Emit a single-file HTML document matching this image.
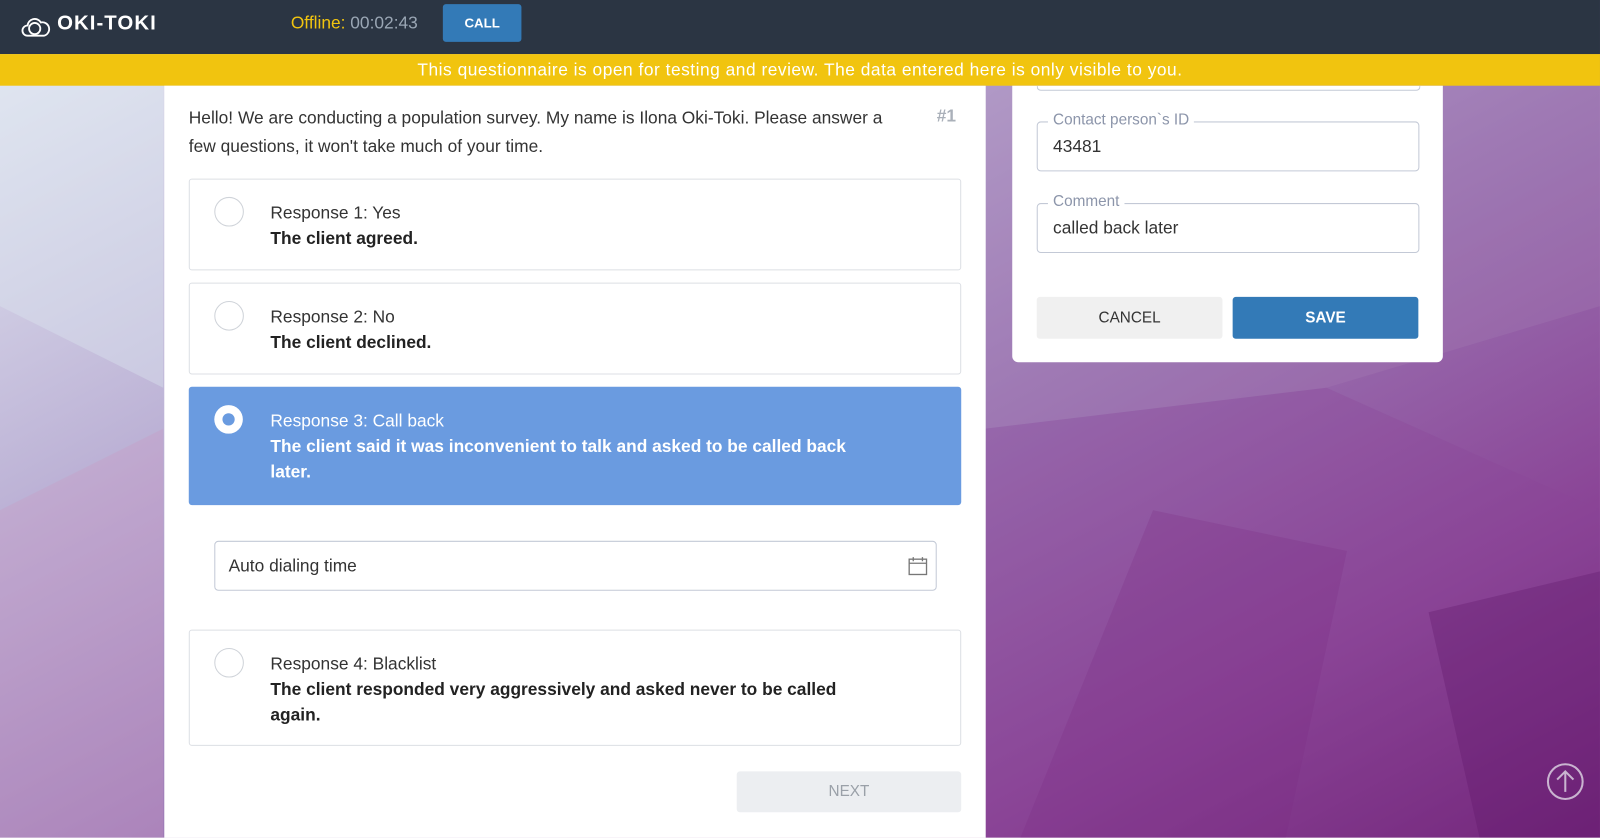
<!DOCTYPE html>
<html><head><meta charset="utf-8"><style>
html,body{margin:0;padding:0;width:1600px;height:838px;overflow:hidden;font-family:"Liberation Sans",sans-serif}
#w{position:absolute;left:0;top:0;width:1568px;height:821px;transform:scale(1.0204);transform-origin:0 0;overflow:hidden}
.abs{position:absolute}
.hdr{left:0;top:0;width:1568px;height:53px;background:#2b3543}
.ybar{left:0;top:53px;width:1568px;height:31px;background:#f1c40f;color:#fff;font-size:17px;text-align:center;line-height:31px;letter-spacing:.5px}
.card{background:#fff;border-radius:0 0 6px 6px}
.q{font-size:17px;color:#333;line-height:28px}
.resp{left:185px;width:755px;border:1px solid #dcdfe4;border-radius:3px;background:#fff;font-size:17px;color:#333}
.resp .t{position:absolute;left:79px;top:20px;line-height:25px}
.resp b{color:#222}
.rad{position:absolute;left:24px;top:17px;width:27px;height:27px;border:1px solid #cfd3d9;border-radius:50%;background:#fff}
.fld{border:1px solid #c3c9d6;border-radius:4px;background:#fff}
.lbl{position:absolute;top:-11px;left:10px;background:#fff;padding:0 5px;color:#8c95aa;font-size:15px}
.btn{border-radius:3px;text-align:center;font-size:15px}
</style></head><body><div id="w">
<svg class="abs" style="left:0;top:0" width="1568" height="821">
<defs><linearGradient id="g" x1="0" y1="0" x2="1" y2="1"><stop offset="0" stop-color="#e8eef5"/><stop offset=".3" stop-color="#bdb3d6"/><stop offset=".55" stop-color="#9c78b5"/><stop offset=".8" stop-color="#8a4496"/><stop offset="1" stop-color="#6a1a70"/></linearGradient></defs>
<rect width="1568" height="821" fill="url(#g)"/>
<polygon points="0,84 160,84 160,380 0,300" fill="#dde6f0" opacity=".4"/>
<polygon points="0,500 160,420 160,821 0,821" fill="#c99ac6" opacity=".35"/>
<polygon points="966,84 1568,84 1568,300 1300,380 966,420" fill="#a77fb3" opacity=".3"/>
<polygon points="966,420 1300,380 1568,500 1568,821 966,821" fill="#8a4598" opacity=".3"/>
<polygon points="1130,500 1320,540 1260,821 1000,821" fill="#7a2b85" opacity=".25"/>
<polygon points="1400,600 1568,560 1568,821 1450,821" fill="#5e1466" opacity=".3"/>
<circle cx="1534" cy="766" r="17" fill="none" stroke="#c9b4d0" stroke-width="2"/>
<path d="M1534 776V756M1526 764l8-8 8 8" fill="none" stroke="#c9b4d0" stroke-width="2"/>
</svg>
<div class="abs hdr"></div>
<svg class="abs" style="left:20px;top:13px" width="30" height="24" viewBox="0 0 30 24"><path d="M7 22a5 5 0 0 1 0-10 7 7 0 0 1 13-3 6 6 0 0 1 3 13z" fill="none" stroke="#fff" stroke-width="1.8"/><circle cx="14" cy="15" r="5.5" fill="none" stroke="#fff" stroke-width="1.8"/></svg>
<div class="abs" style="left:56px;top:12px;color:#fff;font-weight:bold;font-size:20px;letter-spacing:1px">OKI-TOKI</div>
<div class="abs" style="left:285px;top:13px;font-size:17px;color:#f1c40f">Offline: <span style="color:#9aa6b4">00:02:43</span></div>
<div class="abs btn" style="left:434px;top:4px;width:77px;height:37px;line-height:37px;background:#337ab7;color:#fff;font-weight:bold;font-size:13px">CALL</div>
<div class="abs ybar">This questionnaire is open for testing and review. The data entered here is only visible to you.</div>
<div class="abs card" style="left:161px;top:84px;width:805px;height:745px"></div>
<div class="abs q" style="left:185px;top:102px;width:705px">Hello! We are conducting a population survey. My name is Ilona Oki-Toki. Please answer a few questions, it won't take much of your time.</div>
<div class="abs" style="left:918px;top:104px;color:#aab0b9;font-weight:bold;font-size:17px">#1</div>
<div class="abs resp" style="top:175px;height:88px"><div class="rad"></div><div class="t">Response 1: Yes<br><b>The client agreed.</b></div></div>
<div class="abs resp" style="top:277px;height:88px"><div class="rad"></div><div class="t">Response 2: No<br><b>The client declined.</b></div></div>
<div class="abs resp" style="top:379px;height:114px;background:#6a9be0;border-color:#6a9be0;color:#fff"><div class="rad" style="border:none;width:28px;height:28px"><div style="position:absolute;left:8px;top:8px;width:12px;height:12px;border-radius:50%;background:#6a9be0"></div></div><div class="t" style="width:590px">Response 3: Call back<br><b style="color:#fff">The client said it was inconvenient to talk and asked to be called back later.</b></div></div>
<div class="abs fld" style="left:210px;top:530px;width:706px;height:47px;font-size:17px;color:#333;line-height:47px;text-indent:13px">Auto dialing time
<svg class="abs" style="left:679px;top:14px" width="19" height="19" viewBox="0 0 19 19"><rect x="1" y="3" width="17" height="15" fill="none" stroke="#777" stroke-width="1.3"/><path d="M1 7h17M5 1v4M14 1v4" stroke="#777" stroke-width="1.3"/></svg></div>
<div class="abs resp" style="top:617px;height:112px"><div class="rad"></div><div class="t" style="width:600px">Response 4: Blacklist<br><b>The client responded very aggressively and asked never to be called again.</b></div></div>
<div class="abs btn" style="left:722px;top:756px;width:220px;height:40px;line-height:40px;background:#eceef1;color:#9aa0a8">NEXT</div>
<div class="abs card" style="left:992px;top:84px;width:422px;height:271px"></div>
<div class="abs" style="left:1016px;top:84px;width:374px;height:4px;border:1px solid #c3c9d6;border-top:none;border-radius:0 0 4px 4px"></div>
<div class="abs fld" style="left:1016px;top:119px;width:373px;height:47px"><div class="lbl">Contact person`s ID</div><div style="position:absolute;left:15px;top:14px;font-size:17px;color:#333">43481</div></div>
<div class="abs fld" style="left:1016px;top:199px;width:373px;height:47px"><div class="lbl">Comment</div><div style="position:absolute;left:15px;top:14px;font-size:17px;color:#333">called back later</div></div>
<div class="abs btn" style="left:1016px;top:291px;width:182px;height:41px;line-height:41px;background:#f0f0f0;color:#333">CANCEL</div>
<div class="abs btn" style="left:1208px;top:291px;width:182px;height:41px;line-height:41px;background:#337ab7;color:#fff;font-weight:bold">SAVE</div>
</div></body></html>
